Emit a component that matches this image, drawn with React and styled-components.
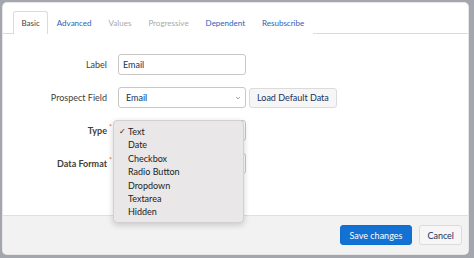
import styled, { createGlobalStyle } from "styled-components";

const GlobalStyle = createGlobalStyle`
  html, body {
    margin: 0;
    padding: 0;
    background: #a3a7ad;
  }
  body {
    font-family: Lato, "Open Sans", sans-serif;
    font-size: 9px;
    color: #16325c;
  }
`;

const Backdrop = styled.div`
  width: 474px;
  height: 258px;
  padding: 3px 6px 4px 3px;
  box-sizing: border-box;
`;

const Modal = styled.div`
  width: 100%;
  height: 100%;
  background: #fff;
  border-radius: 4px;
  display: flex;
  flex-direction: column;
  overflow: hidden;
  box-shadow: 0 0 0 1px #e6e6e6;
`;

const TabBar = styled.div`
  display: flex;
  align-items: flex-end;
  padding: 8px 0 0 10px;
  border-bottom: 1px solid #dddbda;
  height: 22px;
`;

const Tab = styled.div`
  height: 23px;
  line-height: 22px;
  padding: 0 7.5px;
  box-sizing: border-box;
  font-size: 8px;
  color: ${(p) => (p.$active ? "#3e3e3c" : p.$disabled ? "#a8a8a8" : "#2a62b9")};
  background: #fff;
  border: 1px solid ${(p) => (p.$active ? "#dddbda" : "transparent")};
  border-bottom: none;
  border-radius: 3px 3px 0 0;
  margin-bottom: -1px;
`;

const Body = styled.div`
  flex: 1;
  display: grid;
  grid-template-columns: 104px 128px auto;
  grid-auto-rows: 21px;
  row-gap: 12px;
  column-gap: 11px;
  padding-top: 20px;
  align-content: start;
`;

const FieldLabel = styled.div`
  grid-column: 1;
  display: flex;
  align-items: center;
  justify-content: flex-end;
  font-size: 9px;
  font-weight: ${(p) => (p.$required ? 700 : 400)};
  color: #3e3e3c;
  position: relative;
`;

const Star = styled.span`
  position: absolute;
  right: -5px;
  top: 3px;
  color: #e87a2c;
  font-size: 7px;
  font-weight: 400;
`;

const TextInput = styled.div`
  grid-column: 2;
  border: 1px solid #c9c7c5;
  border-radius: 3px;
  display: flex;
  align-items: center;
  padding: 0 4px;
  color: #16325c;
  font-size: 9px;
  background: #fff;
`;

const Select = styled(TextInput)`
  justify-content: space-between;
  padding: 0 4px 0 7px;
  position: relative;
`;

const Chevron = styled.svg`
  width: 6px;
  height: 6px;
  margin-left: auto;
`;

const Button = styled.div`
  display: flex;
  align-items: center;
  justify-content: center;
  height: 20px;
  box-sizing: border-box;
  padding: 0 ${(p) => (p.$primary ? "9px" : "7px")};
  border-radius: 3px;
  font-size: 9px;
  border: 1px solid ${(p) => (p.$primary ? "#0b6fd0" : "#dddbda")};
  background: ${(p) => (p.$primary ? "#1271d2" : "#f6f6f6")};
  color: ${(p) => (p.$primary ? "#fff" : "#16325c")};
`;

const SideCell = styled.div`
  grid-column: 3;
  display: flex;
  align-items: center;
  margin-left: -8px;
`;

const Menu = styled.div`
  position: absolute;
  left: -6px;
  top: -1px;
  width: 129px;
  padding: 4px 0 3px;
  background: #e9e7e7;
  border: 1px solid #d2d0d0;
  border-radius: 4px;
  box-shadow: 0 2px 6px rgba(0, 0, 0, 0.18);
  z-index: 5;
`;

const MenuItem = styled.div`
  height: 13.4px;
  line-height: 13.4px;
  padding-left: 14px;
  font-size: 9px;
  color: #222;
  position: relative;
`;

const Check = styled.span`
  position: absolute;
  left: 5px;
  font-size: 8px;
`;

const Footer = styled.div`
  height: 38px;
  border-top: 1px solid #e2e0df;
  background: #f3f2f2;
  display: flex;
  align-items: center;
  justify-content: flex-end;
  gap: 7px;
  padding-right: 6px;
`;

const tabs = [
  { name: "Basic", active: true },
  { name: "Advanced" },
  { name: "Values", disabled: true },
  { name: "Progressive", disabled: true },
  { name: "Dependent" },
  { name: "Resubscribe" },
];

const typeOptions = ["Text", "Date", "Checkbox", "Radio Button", "Dropdown", "Textarea", "Hidden"];

const Arrow = () => (
  <Chevron viewBox="0 0 10 10">
    <path d="M2 3.5 L5 6.5 L8 3.5" fill="none" stroke="#706e6b" strokeWidth="1.2" />
  </Chevron>
);

const App = () => {
  return (
    <Backdrop>
      <GlobalStyle />
      <Modal>
        <TabBar>
          {tabs.map((t) => (
            <Tab key={t.name} $active={t.active} $disabled={t.disabled}>
              {t.name}
            </Tab>
          ))}
        </TabBar>

        <Body>
          <FieldLabel>Label</FieldLabel>
          <TextInput>Email</TextInput>
          <SideCell />

          <FieldLabel>Prospect Field</FieldLabel>
          <Select>
            Email
            <Arrow />
          </Select>
          <SideCell>
            <Button>Load Default Data</Button>
          </SideCell>

          <FieldLabel $required>
            Type<Star>*</Star>
          </FieldLabel>
          <Select>
            <Arrow />
            <Menu>
              {typeOptions.map((o, i) => (
                <MenuItem key={o}>
                  {i === 0 && <Check>✓</Check>}
                  {o}
                </MenuItem>
              ))}
            </Menu>
          </Select>
          <SideCell />

          <FieldLabel $required>
            Data Format<Star>*</Star>
          </FieldLabel>
          <Select>
            <Arrow />
          </Select>
          <SideCell />
        </Body>

        <Footer>
          <Button $primary>Save changes</Button>
          <Button>Cancel</Button>
        </Footer>
      </Modal>
    </Backdrop>
  );
};

export default App;
